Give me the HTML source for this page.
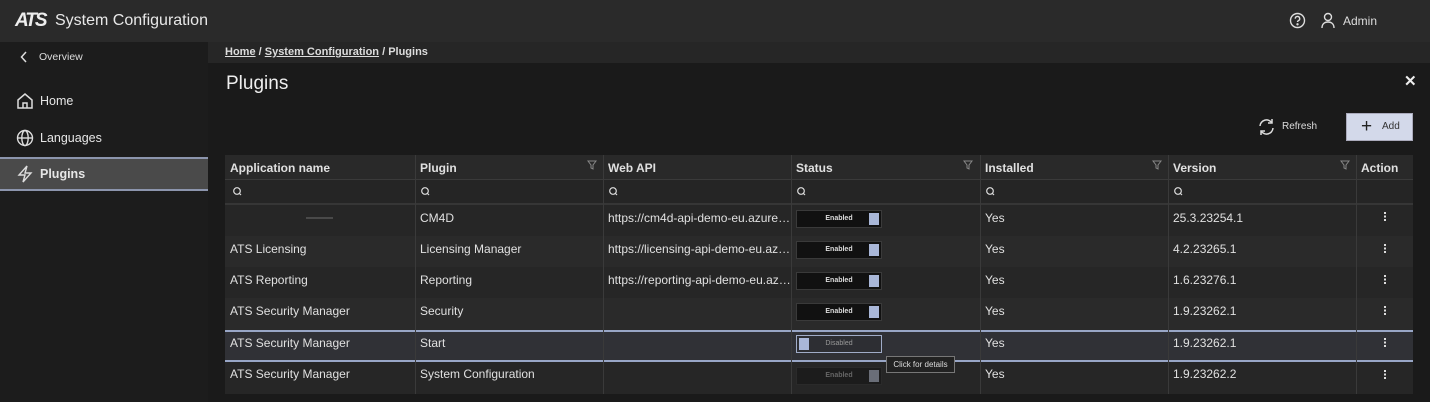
<!DOCTYPE html>
<html><head><meta charset="utf-8"><style>
*{box-sizing:border-box;margin:0;padding:0}
html,body{width:1430px;height:402px;overflow:hidden;background:#1a1a1a}
body{font-family:"Liberation Sans",Arial,sans-serif;color:#e6e6e6;position:relative}
.abs{position:absolute}
.top{left:0;top:0;width:1430px;height:42px;background:#2a2a2a}
.side{left:0;top:42px;width:208px;height:360px;background:#1c1c1c}
.bc{left:208px;top:42px;width:1222px;height:21px;background:#262626;font-size:11px;font-weight:bold;padding:4px 0 0 17px;color:#ddd}
.nav{left:0;width:208px;height:34px;font-size:12.5px;display:flex;align-items:center;padding-left:16px;gap:6px}
.col{position:absolute;top:0;height:100%;border-left:1px solid #3a3a3a}
.row{position:absolute;left:225px;width:1188px;font-size:12px;color:#e0e0e0}
.cell{position:absolute;top:0;height:31px;padding:6px 5px;white-space:nowrap;overflow:hidden}
.tog{position:absolute;left:796px;width:86px;height:18px;border:1px solid #3a3a3a;background:#111;font-size:7px;font-weight:bold;color:#ddd;text-align:center;line-height:16px}
.tog i{position:absolute;top:2px;width:10px;height:12px;background:#a9b7d8}
.dots{position:absolute;left:1384px;width:2px;height:9px;background:repeating-linear-gradient(#ddd 0 2px,transparent 2px 3.5px)}
</style></head><body>
<div class="abs top"></div>
<div class="abs" style="left:15px;top:10px;font:900 italic 19px 'Liberation Sans';letter-spacing:-2px;color:#eee">ATS</div>
<div class="abs" style="left:55px;top:12px;font-size:16px;color:#e8e8e8">System Configuration</div>
<svg class="abs" style="left:1289px;top:12px" width="17" height="17" viewBox="0 0 17 17" fill="none" stroke="#ddd" stroke-width="1.4"><circle cx="8.5" cy="8.5" r="7"/><path d="M6.3 6.7a2.2 2.2 0 1 1 3 2c-.6.3-.8.7-.8 1.3"/><circle cx="8.5" cy="12.3" r=".5" fill="#ddd"/></svg>
<svg class="abs" style="left:1320px;top:12px" width="16" height="17" viewBox="0 0 16 17" fill="none" stroke="#ddd" stroke-width="1.4"><circle cx="8" cy="5" r="3.5"/><path d="M2 16c0-4 2.5-6 6-6s6 2 6 6"/></svg>
<div class="abs" style="left:1343px;top:14px;font-size:12px;color:#ddd">Admin</div>

<div class="abs side"></div>
<svg class="abs" style="left:20px;top:51px" width="8" height="12" viewBox="0 0 8 12" fill="none" stroke="#ddd" stroke-width="1.5"><path d="M6 1L1.5 6 6 11"/></svg>
<div class="abs" style="left:39px;top:51px;font-size:10.5px;color:#ddd">Overview</div>
<div class="abs nav" style="top:84px"><svg width="18" height="18" viewBox="0 0 18 18" fill="none" stroke="#ddd" stroke-width="1.5"><path d="M2 8L9 2l7 6v8H2z"/><path d="M7 16v-5h4v5"/></svg>Home</div>
<div class="abs nav" style="top:121px"><svg width="18" height="18" viewBox="0 0 18 18" fill="none" stroke="#ddd" stroke-width="1.4"><circle cx="9" cy="9" r="7.5"/><ellipse cx="9" cy="9" rx="3.2" ry="7.5"/><path d="M1.5 9h15"/></svg>Languages</div>
<div class="abs" style="left:0;top:157px;width:208px;height:34px;background:#4a4a4a;border-top:2px solid #8c95ad;border-bottom:2px solid #8c95ad"></div>
<div class="abs nav" style="top:157px;font-weight:bold"><svg width="18" height="18" viewBox="0 0 18 18" fill="none" stroke="#ddd" stroke-width="1.4"><path d="M11 1L3 10h6l-2 7 8-9H9z"/></svg>Plugins</div>

<div class="abs bc"><u>Home</u> / <u>System Configuration</u> / Plugins</div>
<div class="abs" style="left:226px;top:73px;font-size:19px;color:#eee">Plugins</div>
<div class="abs" style="left:1404px;top:72px;font-size:15px;font-weight:bold;color:#eee">✕</div>
<svg class="abs" style="left:1257px;top:118px" width="19" height="18" viewBox="0 0 19 18" fill="none" stroke="#ddd" stroke-width="1.5"><path d="M3 8a6.5 6.5 0 0 1 12-3M16 10a6.5 6.5 0 0 1-12 3"/><path d="M15 1v4h-4M4 17v-4h4"/></svg>
<div class="abs" style="left:1282px;top:121px;font-size:10px;color:#ddd">Refresh</div>
<div class="abs" style="left:1346px;top:113px;width:67px;height:28px;background:#d3d9ea;border:1px solid #aab"></div>
<div class="abs" style="left:1361px;top:116px;font-size:19px;color:#222">+</div>
<div class="abs" style="left:1382px;top:121px;font-size:10px;color:#333">Add</div>

<div class="abs" style="left:225px;top:155px;width:1188px;height:239px;background:#262626;border:1px solid #3a3a3a"></div>
<div class="row" style="top:155px;height:25px;background:#292929;font-weight:bold;font-size:12px;border-bottom:1px solid #3a3a3a">
<div class="cell" style="left:0">Application name</div><div class="cell" style="left:190px">Plugin</div><div class="cell" style="left:378px">Web API</div><div class="cell" style="left:566px">Status</div><div class="cell" style="left:755px">Installed</div><div class="cell" style="left:943px">Version</div><div class="cell" style="left:1131px">Action</div>
</div>
<div class="row" style="top:180px;height:25px;background:#252525;border-bottom:2px solid #363636"></div>
<div class="row" style="top:205px;height:31px;background:#262626"></div>
<div class="row" style="top:236px;height:31px;background:#2a2a2a"></div>
<div class="row" style="top:267px;height:31px;background:#262626"></div>
<div class="row" style="top:298px;height:32px;background:#2a2a2a"></div>
<div class="row" style="top:330px;height:32px;background:#303136;border-top:2px solid #98a6c6;border-bottom:2px solid #98a6c6"></div>
<div class="row" style="top:362px;height:32px;background:#262626"></div>
<div class="row" style="top:155px;height:239px">
<div class="col" style="left:190px"></div><div class="col" style="left:378px"></div><div class="col" style="left:566px"></div><div class="col" style="left:755px"></div><div class="col" style="left:943px"></div><div class="col" style="left:1131px"></div>
</div>
<svg class="abs" style="left:0;top:0" width="1430" height="230" fill="none" stroke="#ddd" stroke-width="1.2">
<g id="s"><circle cx="237" cy="191" r="3.3"/><path d="M239.5 193.5l1.5 1.5"/></g>
<use href="#s" x="188"/><use href="#s" x="376"/><use href="#s" x="564"/><use href="#s" x="753"/><use href="#s" x="941"/>
<g stroke="#888" stroke-width="1"><path d="M588 161h8l-3 4v4l-2-1v-3z"/><path d="M964 161h8l-3 4v4l-2-1v-3z"/><path d="M1153 161h8l-3 4v4l-2-1v-3z"/><path d="M1341 161h8l-3 4v4l-2-1v-3z"/></g>
<path d="M306 218h27" stroke="#555" stroke-width="1.5"/>
</svg>
<div class="row" style="top:205px;height:189px">
<div class="cell" style="left:190px;top:0">CM4D</div><div class="cell" style="left:378px;top:0">https://cm4d-api-demo-eu.azure…</div><div class="cell" style="left:755px;top:0">Yes</div><div class="cell" style="left:943px;top:0">25.3.23254.1</div>
<div class="cell" style="left:0;top:31px">ATS Licensing</div><div class="cell" style="left:190px;top:31px">Licensing Manager</div><div class="cell" style="left:378px;top:31px">https://licensing-api-demo-eu.az…</div><div class="cell" style="left:755px;top:31px">Yes</div><div class="cell" style="left:943px;top:31px">4.2.23265.1</div>
<div class="cell" style="left:0;top:62px">ATS Reporting</div><div class="cell" style="left:190px;top:62px">Reporting</div><div class="cell" style="left:378px;top:62px">https://reporting-api-demo-eu.az…</div><div class="cell" style="left:755px;top:62px">Yes</div><div class="cell" style="left:943px;top:62px">1.6.23276.1</div>
<div class="cell" style="left:0;top:93px">ATS Security Manager</div><div class="cell" style="left:190px;top:93px">Security</div><div class="cell" style="left:755px;top:93px">Yes</div><div class="cell" style="left:943px;top:93px">1.9.23262.1</div>
<div class="cell" style="left:0;top:125px">ATS Security Manager</div><div class="cell" style="left:190px;top:125px">Start</div><div class="cell" style="left:755px;top:125px">Yes</div><div class="cell" style="left:943px;top:125px">1.9.23262.1</div>
<div class="cell" style="left:0;top:156px">ATS Security Manager</div><div class="cell" style="left:190px;top:156px">System Configuration</div><div class="cell" style="left:755px;top:156px">Yes</div><div class="cell" style="left:943px;top:156px">1.9.23262.2</div>
</div>
<div class="tog" style="top:210px">Enabled<i style="right:2px"></i></div>
<div class="tog" style="top:241px">Enabled<i style="right:2px"></i></div>
<div class="tog" style="top:272px">Enabled<i style="right:2px"></i></div>
<div class="tog" style="top:303px">Enabled<i style="right:2px"></i></div>
<div class="tog" style="top:335px;background:#2d2e33;border-color:#a0acc8;color:#999;font-weight:normal">Disabled<i style="left:2px"></i></div>
<div class="tog" style="top:367px;background:#1c1c1c;border-color:#2a2a2a;color:#666"><span>Enabled</span><i style="right:2px;background:#6a6e78"></i></div>
<div class="abs" style="left:886px;top:356px;width:69px;height:17px;background:#222;border:1px solid #777;font-size:8px;color:#ddd;text-align:center;line-height:15px">Click for details</div>
<div class="dots" style="top:212px"></div><div class="dots" style="top:244px"></div><div class="dots" style="top:275px"></div><div class="dots" style="top:306px"></div><div class="dots" style="top:338px"></div><div class="dots" style="top:370px"></div>
</body></html>
